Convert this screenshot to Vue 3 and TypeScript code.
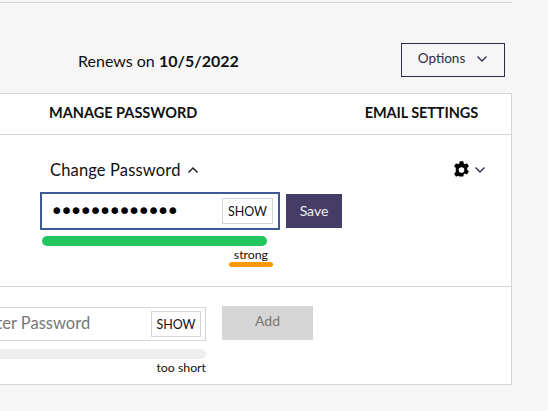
<script setup lang="ts">
const dots = '•'.repeat(13)
</script>

<template>
  <div class="page">
    <div class="inner">
      <header class="head">
        <p class="renew">Renews on <b>10/5/2022</b></p>
        <button class="options">
          <span>Options</span>
          <svg width="12" height="8" viewBox="0 0 12 8"><path d="M1.5 1.5 6 6l4.5-4.5" fill="none" stroke="#2b2d4a" stroke-width="1.3" /></svg>
        </button>
      </header>
      <main class="card">
        <nav class="tabs">
          <span>MANAGE PASSWORD</span>
          <span class="email">EMAIL SETTINGS</span>
        </nav>
        <section class="change">
          <div class="title-row">
            <h2>Change Password
              <svg width="12" height="8" viewBox="0 0 12 8"><path d="M1.5 6.5 6 2l4.5 4.5" fill="none" stroke="#222" stroke-width="1.5" /></svg>
            </h2>
            <div class="gear">
              <svg width="17" height="18" viewBox="0.5 0 15 16">
                <path fill="#000" fill-rule="evenodd" d="M6.4.2h3.2l.4 2.1 1 .5 1.9-.8 1.7 2.8-1.5 1.3v1.8l1.5 1.3-1.7 2.8-1.9-.8-1 .5-.4 2.1H6.4L6 13.7l-1-.5-1.9.8-1.7-2.8 1.5-1.3V6.1L1.4 4.8l1.7-2.8 1.9.8 1-.5zM8 5.5a2.5 2.5 0 1 0 0 5 2.5 2.5 0 0 0 0-5z" />
              </svg>
              <svg width="12" height="8" viewBox="0 0 12 8"><path d="M1.5 1.5 6 6l4.5-4.5" fill="none" stroke="#2b2d4a" stroke-width="1.3" /></svg>
            </div>
          </div>
          <div class="form">
            <div class="field active">
              <span class="dots">{{ dots }}</span>
              <button class="show">SHOW</button>
            </div>
            <button class="save">Save</button>
          </div>
          <div class="meter green"></div>
          <div class="strength">
            <span>strong</span>
            <i></i>
          </div>
        </section>
        <section class="add">
          <div class="add-col">
            <div class="field idle">
              <span class="placeholder">Enter Password</span>
              <button class="show">SHOW</button>
            </div>
            <div class="meter grey"></div>
            <div class="short">too short</div>
          </div>
          <button class="addbtn">Add</button>
        </section>
      </main>
    </div>
  </div>
</template>

<style scoped>
.page {
  width: 548px;
  height: 411px;
  overflow: hidden;
  background: #f6f6f6;
  font-family: Lato, "Noto Sans", sans-serif;
  color: #111;
}
.inner {
  width: 712px;
  margin-left: -200px;
  padding-top: 2px;
}
.head {
  height: 91px;
  box-sizing: border-box;
  border-top: 1px solid #d5d5d5;
  display: flex;
  align-items: flex-start;
  justify-content: space-between;
  padding: 40px 7px 0 278px;
}
.renew {
  margin: 6px 0 0;
  font-size: 16px;
  line-height: 24px;
}
.options {
  width: 104px;
  height: 34px;
  box-sizing: border-box;
  border: 1px solid #2b2d4a;
  background: transparent;
  font: inherit;
  font-size: 13.5px;
  color: #2b2d4a;
  display: flex;
  align-items: center;
  justify-content: center;
  gap: 11px;
  padding: 0 0 4px;
}
.options svg {
  margin-top: 2px;
}
.card {
  height: 292px;
  box-sizing: border-box;
  background: #fff;
  border: 1px solid #d5d5d5;
}
.tabs {
  height: 41px;
  box-sizing: border-box;
  border-bottom: 1px solid #d5d5d5;
  display: flex;
  justify-content: space-between;
  align-items: center;
  padding: 0 33px 4px 248px;
  font-size: 14.5px;
  font-weight: 700;
}
.email {
  letter-spacing: -0.1px;
}
.change {
  height: 152px;
  box-sizing: border-box;
  border-bottom: 1px solid #d5d5d5;
  padding: 24px 25px 0 239px;
}
.title-row {
  display: flex;
  justify-content: space-between;
  align-items: center;
  padding-left: 10px;
  height: 22px;
}
h2 {
  margin: 0;
  font-size: 16.5px;
  letter-spacing: 0.15px;
  font-weight: 400;
  display: flex;
  align-items: center;
  gap: 6px;
}
.gear {
  display: flex;
  align-items: center;
  gap: 4px;
}
.form {
  display: flex;
  gap: 6px;
  margin-top: 11px;
  align-items: center;
}
.field {
  box-sizing: border-box;
  display: flex;
  align-items: center;
  justify-content: space-between;
  background: #fff;
}
.active {
  width: 240px;
  height: 38px;
  border: 2px solid #3d5a94;
  padding: 0 5px 0 8px;
}
.dots {
  font-size: 23px;
  line-height: 1;
  font-family: "DejaVu Sans", sans-serif;
  letter-spacing: -3.9px;
  color: #000;
}
.show {
  width: 51px;
  height: 26px;
  box-sizing: border-box;
  border: 1px solid #d5d5d5;
  background: #fff;
  font: inherit;
  font-size: 12.5px;
  color: #111;
  padding: 0;
}
.save {
  width: 56px;
  height: 34px;
  border: 0;
  background: #453d66;
  color: #f2f2f2;
  font: inherit;
  font-size: 14px;
  padding: 0 0 2px;
}
.meter {
  height: 10px;
  border-radius: 5px;
}
.green {
  width: 225px;
  margin: 6px 0 0 2px;
  background: #22c55e;
}
.strength {
  width: 231px;
  margin-left: 2px;
  display: flex;
  flex-direction: column;
  align-items: flex-end;
  font-size: 12.3px;
  line-height: 14px;
  margin-top: 2px;
}
.strength span {
  margin-right: 5px;
}
.strength i {
  display: block;
  width: 44px;
  height: 5px;
  border-radius: 3px;
  background: #ff9800;
}
.add {
  display: flex;
  align-items: flex-start;
  padding: 19px 0 0 163px;
  gap: 16px;
}
.add-col {
  width: 242px;
}
.idle {
  height: 34px;
  border: 1px solid #d5d5d5;
  padding: 0 4px 2px 0;
  justify-content: space-between;
  margin-top: 1px;
}
.placeholder {
  font-size: 16.5px;
  color: #777;
  padding-left: 13px;
}
.idle .show {
  width: 50px;
  margin-top: 2px;
}
.grey {
  margin-top: 8px;
  background: #eee;
}
.short {
  text-align: right;
  font-size: 12.3px;
  line-height: 14px;
  margin-top: 2px;
}
.addbtn {
  width: 91px;
  height: 34px;
  border: 0;
  background: #d5d5d5;
  color: #777;
  font: inherit;
  font-size: 14px;
  padding: 0 0 6px;
}
</style>
